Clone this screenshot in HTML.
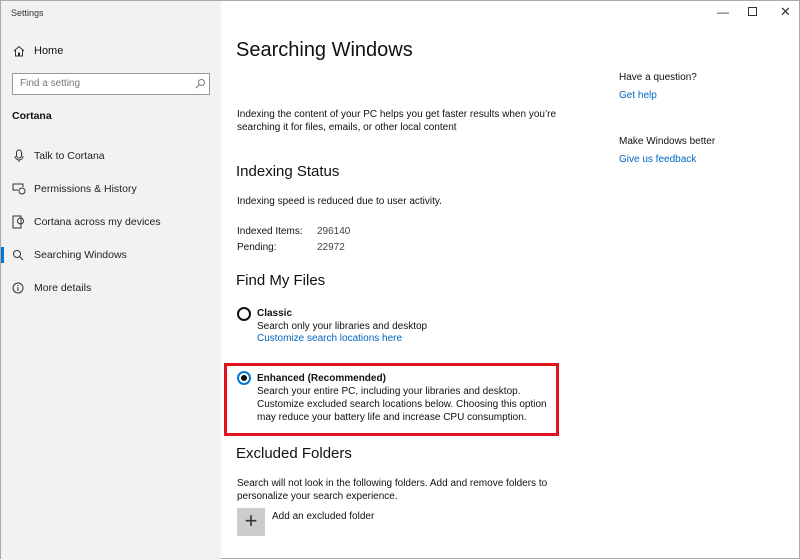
<!DOCTYPE html>
<html><head><style>
*{margin:0;padding:0;box-sizing:border-box}
body{width:800px;height:559px;overflow:hidden;background:#fff;font-family:"Liberation Sans",sans-serif;color:#000;position:relative;border:1px solid #aaa}
.a{position:absolute;white-space:nowrap}
.side{position:absolute;left:0;top:0;width:220px;height:559px;background:#f2f2f2}
.s{font-size:10.5px;color:#222}
.n{font-size:11px;color:#111}
.h{font-size:15px;color:#111}
.t{font-size:10px;color:#111;line-height:13px}
.l{font-size:10px;color:#0067c0}
</style></head><body>
<div class="side"></div>
<div class="a" style="left:10px;top:7px;font-size:9px;color:#333">Settings</div>
<div class="a" style="left:716px;top:4px;font-size:12px;color:#333">&#8212;</div>
<div class="a" style="left:747px;top:6px;width:9px;height:9px;border:1px solid #333"></div>
<div class="a" style="left:779px;top:3px;font-size:13px;color:#333">✕</div>
<svg class="a" style="left:12px;top:44px" width="12" height="12" viewBox="0 0 12 12" fill="none" stroke="#333"><path d="M1 6L6 1.5 11 6M2.5 5v6h3V8h1v3h3V5"/></svg>
<div class="a n" style="left:33px;top:44px">Home</div>
<div class="a" style="left:11px;top:72px;width:198px;height:22px;border:1px solid #999;background:#fff"></div>
<div class="a" style="left:19px;top:77px;font-size:10px;color:#777">Find a setting</div>
<svg class="a" style="left:194px;top:77px" width="11" height="11" viewBox="0 0 11 11" fill="none" stroke="#777"><circle cx="6.5" cy="4.5" r="3"/><path d="M4.5 6.5L1 10"/></svg>
<div class="a" style="left:11px;top:109px;font-size:10.5px;font-weight:bold;color:#111">Cortana</div>
<svg class="a" style="left:12px;top:148px" width="12" height="14" viewBox="0 0 12 14" fill="none" stroke="#333"><rect x="3.5" y="1" width="5" height="8" rx="2.5"/><path d="M2 7a4 4 0 008 0M6 11v2"/></svg>
<div class="a s" style="left:33px;top:149px">Talk to Cortana</div>
<svg class="a" style="left:11px;top:182px" width="14" height="12" viewBox="0 0 14 12" fill="none" stroke="#333"><path d="M6 7H1V1h10v3"/><circle cx="10" cy="8" r="3"/></svg>
<div class="a s" style="left:33px;top:182px">Permissions &amp; History</div>
<svg class="a" style="left:11px;top:214px" width="13" height="14" viewBox="0 0 13 14" fill="none" stroke="#333"><rect x="1" y="1" width="8" height="12"/><circle cx="8.5" cy="6" r="3"/></svg>
<div class="a s" style="left:33px;top:215px">Cortana across my devices</div>
<div class="a" style="left:0;top:246px;width:3px;height:16px;background:#0078d7"></div>
<svg class="a" style="left:11px;top:248px" width="12" height="12" viewBox="0 0 12 12" fill="none" stroke="#333"><circle cx="5" cy="5" r="3.5"/><path d="M7.5 7.5L11 11"/></svg>
<div class="a s" style="left:33px;top:248px">Searching Windows</div>
<svg class="a" style="left:11px;top:281px" width="12" height="12" viewBox="0 0 12 12" fill="none" stroke="#333"><circle cx="6" cy="6" r="5"/><path d="M6 5v4M6 3v1"/></svg>
<div class="a s" style="left:33px;top:281px">More details</div>

<div class="a" style="left:235px;top:38px;font-size:20px;color:#111">Searching Windows</div>
<div class="a t" style="left:236px;top:107px">Indexing the content of your PC helps you get faster results when you’re<br>searching it for files, emails, or other local content</div>
<div class="a h" style="left:235px;top:162px">Indexing Status</div>
<div class="a t" style="left:236px;top:194px">Indexing speed is reduced due to user activity.</div>
<div class="a t" style="left:236px;top:224px">Indexed Items:</div>
<div class="a t" style="left:316px;top:224px;color:#444">296140</div>
<div class="a t" style="left:236px;top:240px">Pending:</div>
<div class="a t" style="left:316px;top:240px;color:#444">22972</div>
<div class="a h" style="left:235px;top:271px">Find My Files</div>
<div class="a" style="left:236px;top:306px;width:14px;height:14px;border:2px solid #111;border-radius:50%"></div>
<div class="a t" style="left:256px;top:306px;font-weight:bold">Classic</div>
<div class="a t" style="left:256px;top:319px">Search only your libraries and desktop</div>
<div class="a l" style="left:256px;top:332px">Customize search locations here</div>
<div class="a" style="left:223px;top:362px;width:335px;height:73px;border:3px solid #e3121f"></div>
<div class="a" style="left:236px;top:370px;width:14px;height:14px;border:2px solid #0078d7;border-radius:50%"></div>
<div class="a" style="left:240px;top:374px;width:6px;height:6px;background:#111;border-radius:50%"></div>
<div class="a t" style="left:256px;top:371px;font-weight:bold">Enhanced (Recommended)</div>
<div class="a t" style="left:256px;top:384px">Search your entire PC, including your libraries and desktop.<br>Customize excluded search locations below. Choosing this option<br>may reduce your battery life and increase CPU consumption.</div>
<div class="a h" style="left:235px;top:444px">Excluded Folders</div>
<div class="a t" style="left:236px;top:476px">Search will not look in the following folders. Add and remove folders to<br>personalize your search experience.</div>
<div class="a" style="left:236px;top:507px;width:28px;height:28px;background:#ccc;color:#333;font-size:22px;line-height:26px;text-align:center;font-weight:300">+</div>
<div class="a t" style="left:271px;top:509px">Add an excluded folder</div>

<div class="a t" style="left:618px;top:70px">Have a question?</div>
<div class="a l" style="left:618px;top:89px">Get help</div>
<div class="a t" style="left:618px;top:134px">Make Windows better</div>
<div class="a l" style="left:618px;top:153px">Give us feedback</div>
</body></html>
